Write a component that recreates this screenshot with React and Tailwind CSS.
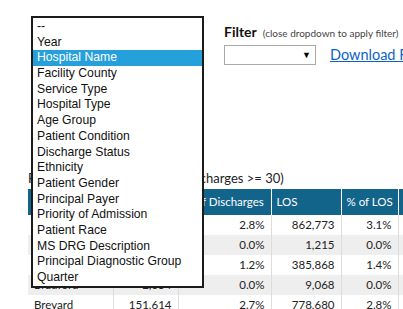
import React from "react";

const options = [
  "--",
  "Year",
  "Hospital Name",
  "Facility County",
  "Service Type",
  "Hospital Type",
  "Age Group",
  "Patient Condition",
  "Discharge Status",
  "Ethnicity",
  "Patient Gender",
  "Principal Payer",
  "Priority of Admission",
  "Patient Race",
  "MS DRG Description",
  "Principal Diagnostic Group",
  "Quarter",
];

const rows = [
  ["Alachua", "245,118", "2.8%", "862,773", "3.1%"],
  ["Baker", "302", "0.0%", "1,215", "0.0%"],
  ["Bay", "104,512", "1.2%", "385,868", "1.4%"],
  ["Bradford", "2,354", "0.0%", "9,068", "0.0%"],
  ["Brevard", "151,614", "2.7%", "778,680", "2.8%"],
];

function App() {
  return (
    <div
      className="relative w-[403px] h-[309px] overflow-hidden bg-white text-[#222]"
      style={{ fontFamily: "Lato, 'Open Sans', sans-serif" }}
    >
      <div className="pl-[28px] pt-[21px]">
        <div className="flex">
          <div className="w-[196px] shrink-0" />
          <div className="flex flex-col shrink-0">
            <div className="flex items-baseline gap-[6px] h-[20px] whitespace-nowrap">
              <span className="text-[14px] font-bold text-[#111]">Filter</span>
              <span className="text-[10px] text-[#444]">
                (close dropdown to apply filter)
              </span>
            </div>
            <div className="flex items-center mt-[3px] whitespace-nowrap">
              <div className="w-[92px] h-[20px] border border-[#a9a9a9] flex items-center justify-end pr-[4px]">
                <span className="text-[9px] text-black">▼</span>
              </div>
              <a
                href="#"
                className="ml-[14px] text-[14.5px] text-[#0b62c8] underline"
              >
                Download Report
              </a>
            </div>
          </div>
        </div>

        <div className="mt-[104px] text-[13px] text-[#222] whitespace-nowrap leading-[16px]">
          Facility Totals by Counties (Discharges &gt;= 30)
        </div>

        <table className="mt-[3px] table-fixed w-[460px] border-collapse text-[11.5px] whitespace-nowrap">
          <colgroup>
            <col className="w-[85px]" />
            <col className="w-[65px]" />
            <col className="w-[93px]" />
            <col className="w-[70px]" />
            <col className="w-[57px]" />
            <col className="w-[90px]" />
          </colgroup>
          <thead>
            <tr className="bg-[#12648a] text-white h-[26px]">
              <th className="text-left font-normal px-[5px] border-r border-white">County</th>
              <th className="text-left font-normal px-[5px] border-r border-white"># Disch.</th>
              <th className="text-left font-normal px-[5px] border-r border-white">% of Discharges</th>
              <th className="text-left font-normal px-[5px] border-r border-white">LOS</th>
              <th className="text-left font-normal px-[5px] border-r border-white">% of LOS</th>
              <th className="text-left font-normal px-[5px]">Avg LOS</th>
            </tr>
          </thead>
          <tbody>
            {rows.map((r, i) => (
              <tr key={r[0]} className={`h-[20px] ${i % 2 ? "bg-[#eeeeee]" : "bg-white"}`}>
                <td className="px-[6px] text-left font-normal border-r border-[#dddddd]">{r[0]}</td>
                <td className="px-[6px] text-right border-r border-[#dddddd]">{r[1]}</td>
                <td className="px-[6px] text-right border-r border-[#dddddd]">{r[2]}</td>
                <td className="px-[6px] text-right border-r border-[#dddddd]">{r[3]}</td>
                <td className="px-[6px] text-right border-r border-[#dddddd]">{r[4]}</td>
                <td className="px-[6px] text-right">3.5</td>
              </tr>
            ))}
          </tbody>
        </table>
      </div>

      {/* open listbox */}
      <div
        className="absolute left-[31px] top-[16px] w-[173px] h-[272px] border-2 border-[#1b1b1b] bg-white pt-[1px]"
        style={{ fontFamily: "'Liberation Sans', Arial, sans-serif" }}
      >
        {options.map((o, i) => (
          <div
            key={o}
            className={`h-[15.7px] leading-[15.7px] pl-[4px] text-[12.2px] whitespace-nowrap ${
              i === 2 ? "bg-[#26a0da] text-white" : "text-[#111]"
            }`}
          >
            {o}
          </div>
        ))}
      </div>
    </div>
  );
}

export default App;
